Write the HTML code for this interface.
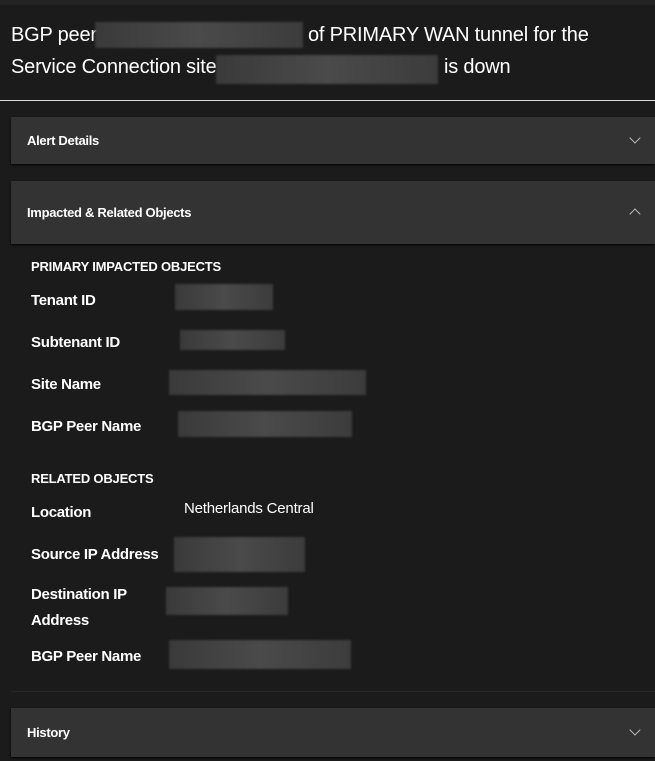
<!DOCTYPE html>
<html><head><style>
body{margin:0;width:655px;height:761px;background:#1b1b1b;font-family:"Liberation Sans",sans-serif;color:#fff;position:relative;overflow:hidden}
.a{position:absolute}
.t{font-size:20px;left:11px;white-space:nowrap;letter-spacing:-0.2px}
.b{position:absolute;background:linear-gradient(90deg,#3a3a3a,#4a4a4a 50%,#3c3c3c);filter:blur(1px)}
.p{position:absolute;left:11px;width:644px;background:#333;box-shadow:0 1px 2px #000}
.p span{position:absolute;left:16px;font-size:13px;font-weight:bold;letter-spacing:-0.3px}
.ch{position:absolute;right:16px;width:7px;height:7px;border-right:1.5px solid #bbb;border-bottom:1.5px solid #bbb}
.l{position:absolute;left:31px;font-size:15px;font-weight:bold;letter-spacing:-0.3px}
.h{position:absolute;left:31px;font-size:13px;font-weight:bold;letter-spacing:-0.2px}
</style></head><body>
<div class="a" style="left:0;top:0;width:655px;height:5px;background:#232323"></div>
<div class="a t" style="top:24px">BGP peer</div>
<div class="b" style="left:95px;top:22px;width:208px;height:26px"></div>
<div class="a t" style="left:308px;top:24px">of PRIMARY WAN tunnel for the</div>
<div class="a t" style="top:56px">Service Connection site</div>
<div class="b" style="left:216px;top:55px;width:222px;height:29px"></div>
<div class="a t" style="left:444px;top:56px">is down</div>
<div class="a" style="left:0;top:100px;width:655px;height:1px;background:#ddd"></div>
<div class="p" style="top:117px;height:47px"><span style="top:16px">Alert Details</span><div class="ch" style="top:17px;transform:rotate(45deg)"></div></div>
<div class="p" style="top:181px;height:63px"><span style="top:24px">Impacted &amp; Related Objects</span><div class="ch" style="top:29px;transform:rotate(-135deg)"></div></div>
<div class="a" style="left:11px;top:691px;width:644px;height:1px;background:#262626"></div>
<div class="h" style="top:259px">PRIMARY IMPACTED OBJECTS</div>
<div class="l" style="top:292px">Tenant ID</div><div class="b" style="left:175px;top:284px;width:98px;height:26px"></div>
<div class="l" style="top:334px">Subtenant ID</div><div class="b" style="left:180px;top:330px;width:105px;height:20px"></div>
<div class="l" style="top:376px">Site Name</div><div class="b" style="left:169px;top:370px;width:197px;height:25px"></div>
<div class="l" style="top:418px">BGP Peer Name</div><div class="b" style="left:178px;top:411px;width:174px;height:26px"></div>
<div class="h" style="top:471px">RELATED OBJECTS</div>
<div class="l" style="top:504px">Location</div>
<div class="a" style="left:184px;top:500px;font-size:15px;letter-spacing:-0.2px">Netherlands Central</div>
<div class="l" style="top:546px">Source IP Address</div><div class="b" style="left:174px;top:537px;width:131px;height:35px"></div>
<div class="l" style="top:582px;line-height:26px">Destination IP<br>Address</div><div class="b" style="left:166px;top:587px;width:122px;height:28px"></div>
<div class="l" style="top:648px">BGP Peer Name</div><div class="b" style="left:169px;top:640px;width:182px;height:29px"></div>
<div class="p" style="top:708px;height:49px"><span style="top:17px">History</span><div class="ch" style="top:18px;transform:rotate(45deg)"></div></div>
</body></html>
